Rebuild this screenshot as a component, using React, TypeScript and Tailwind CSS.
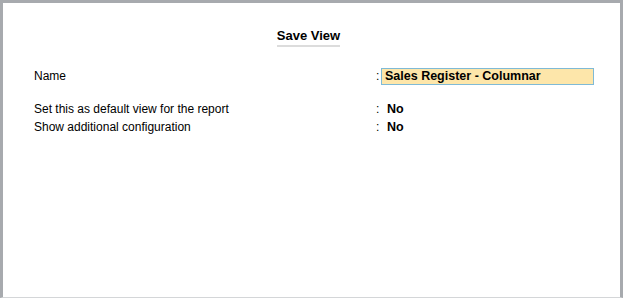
export default function App() {
  return (
    <div
      className="h-[298px] w-[623px] bg-white text-[12px] text-black"
      style={{ fontFamily: '"Liberation Sans", Arial, sans-serif' }}
    >
      <div className="flex h-full flex-col border-x-[3px] border-t-[3px] border-b border-x-[#a7aaae] border-t-[#a7aaae] border-b-[#d4d6d8]">
        <div className="flex justify-center pr-[6px] pt-[25px]">
          <h1 className="border-b-2 border-[#dcdcdc] pb-[1px] text-[13px] font-bold leading-[16px]">
            Save View
          </h1>
        </div>

        <div className="flex flex-col pl-[31px] pt-[20px]">
          <div className="flex h-[18px] items-center">
            <span className="w-[342px]">Name</span>
            <span className="w-[5px]">:</span>
            <span className="h-[17px] w-[213px] border border-[#7fbad6] bg-[#fde6aa] pl-[3px] text-[12.5px] font-bold leading-[15px]">
              Sales Register - Columnar
            </span>
          </div>

          <div className="mt-[15px] flex h-[18px] items-center">
            <span className="w-[342px]">Set this as default view for the report</span>
            <span className="w-[11px]">:</span>
            <span className="text-[12.5px] font-bold">No</span>
          </div>
          <div className="flex h-[18px] items-center">
            <span className="w-[342px]">Show additional configuration</span>
            <span className="w-[11px]">:</span>
            <span className="text-[12.5px] font-bold">No</span>
          </div>
        </div>
      </div>
    </div>
  );
}
